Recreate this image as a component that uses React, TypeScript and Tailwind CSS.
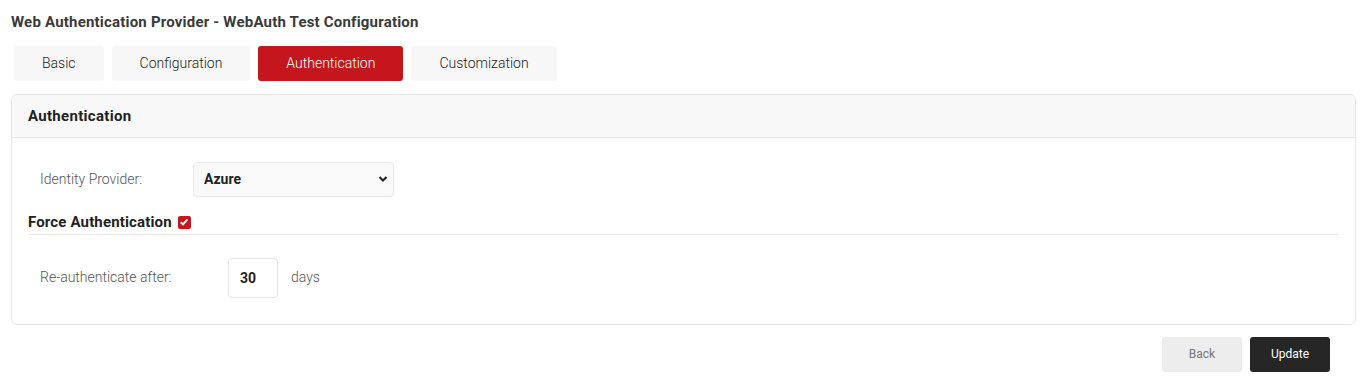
import React from 'react';

const tabs = ['Basic', 'Configuration', 'Authentication', 'Customization'];

export default function App() {
  const active = 'Authentication';
  return (
    <div className="min-h-screen bg-white pl-[11px] pr-[15px] pt-[13px] text-[14px] text-[#333]" style={{ fontFamily: 'Roboto, "Liberation Sans", sans-serif' }}>
      <h1 className="text-[15px] font-bold leading-[18px] tracking-[0.2px] text-[#3a3a3a]">
        Web Authentication Provider - WebAuth Test Configuration
      </h1>

      <div className="mt-[15px] flex gap-[8px] pl-[3px]">
        {tabs.map((t) => (
          <button
            key={t}
            className={
              t === active
                ? 'h-[35px] rounded-[3px] bg-[#c4161c] px-[28px] text-[14px] font-light text-white'
                : 'h-[35px] rounded-[3px] bg-[#f7f7f7] px-[28px] text-[14px] font-light text-[#222]'
            }
          >
            {t}
          </button>
        ))}
      </div>

      <div className="mt-[13px] rounded-[6px] border border-[#e6e6e6]">
        <div className="flex h-[43px] items-center rounded-t-[6px] border-b border-[#e9e9e9] bg-[#f8f8f8] px-4">
          <h2 className="text-[15px] font-bold tracking-[0.3px] text-[#222]">Authentication</h2>
        </div>

        <div className="px-4 pb-[26px] pt-[24px]">
          <div className="flex items-center pl-3">
            <label className="w-[153px] text-[14px] font-light text-[#555]">Identity Provider:</label>
            <div className="relative">
              <select className="h-[35px] w-[201px] appearance-none rounded-[4px] border border-[#ebebeb] bg-[#f9f9f9] pl-[10px] text-[14px] font-bold text-[#222] outline-none">
                <option>Azure</option>
              </select>
              <svg className="pointer-events-none absolute right-[6px] top-[13px]" width="10" height="8" viewBox="0 0 10 8">
                <path d="M1.5 2 L5 5.5 L8.5 2" fill="none" stroke="#222" strokeWidth="2" />
              </svg>
            </div>
          </div>

          <div className="mt-[14px] flex items-center gap-[6px] border-b border-[#e8e8e8] pb-0">
            <span className="text-[15px] font-bold tracking-[0.15px] text-[#222]">Force Authentication</span>
            <span className="flex h-[13px] w-[13px] items-center justify-center rounded-[2px] bg-[#c4161c]">
              <svg width="10" height="10" viewBox="0 0 10 10">
                <path d="M1.8 5.2 L4.1 7.4 L8.4 2.4" fill="none" stroke="white" strokeWidth="2" />
              </svg>
            </span>
          </div>

          <div className="mt-[23px] flex items-center pl-3">
            <label className="w-[188px] text-[14px] font-light text-[#555]">Re-authenticate after:</label>
            <input
              readOnly
              value="30"
              className="h-[40px] w-[50px] rounded-[4px] border border-[#e6e6e6] bg-white pl-[11px] text-[14px] font-bold text-[#222] outline-none"
            />
            <span className="ml-[13px] text-[14px] font-light text-[#555]">days</span>
          </div>
        </div>
      </div>

      <div className="mr-[26px] mt-[12px] flex justify-end gap-[8px]">
        <button className="h-[35px] w-[80px] rounded-[3px] bg-[#ededed] text-[12px] text-[#777]">Back</button>
        <button className="h-[35px] w-[80px] rounded-[3px] bg-[#262626] text-[12px] text-white">Update</button>
      </div>
    </div>
  );
}
